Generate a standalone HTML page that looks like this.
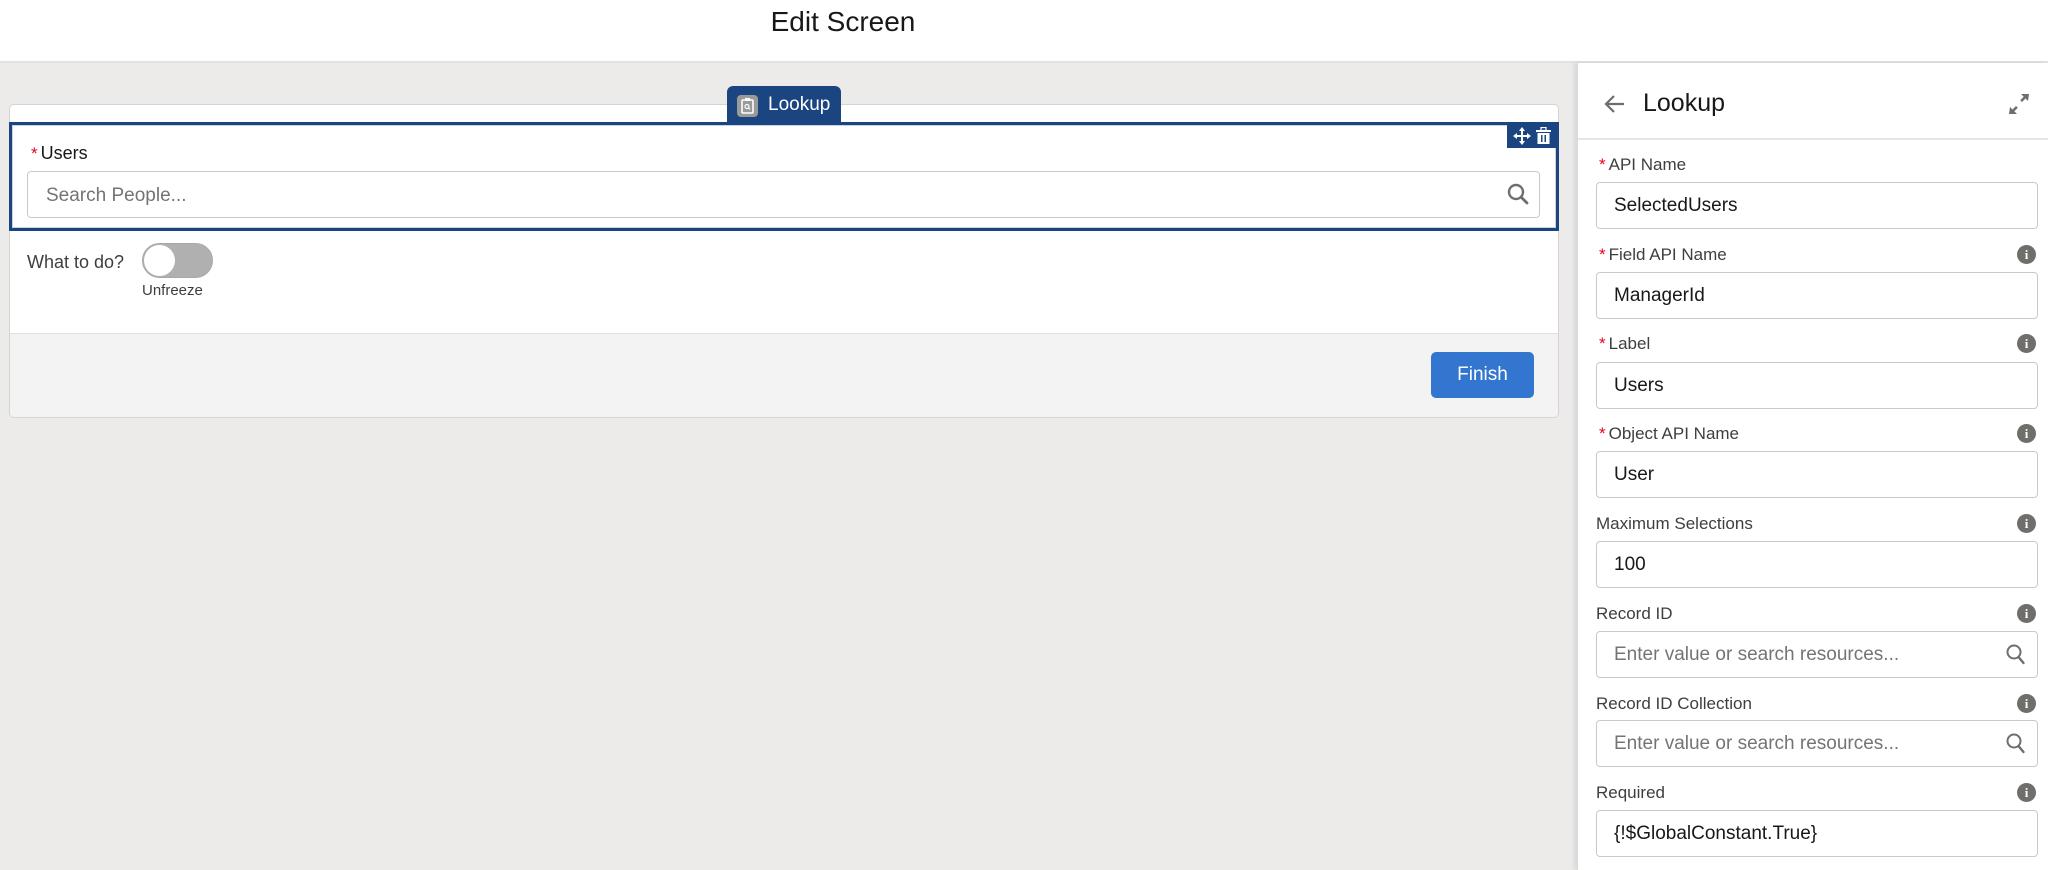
<!DOCTYPE html>
<html><head><meta charset="utf-8"><style>
*{box-sizing:border-box;margin:0;padding:0}
body{width:2048px;height:870px;overflow:hidden;background:#ecebea;font-family:"Liberation Sans",sans-serif;color:#181818;position:relative}
.abs{position:absolute}
.hdr{left:0;top:0;width:2048px;height:63px;background:#fff;border-bottom:2px solid #e2e2e2}
.title{left:0;width:1686px;top:6px;text-align:center;font-size:28px;color:#181818}
.card{left:9px;top:104px;width:1550px;height:314px;background:#fff;border:1px solid #d4d4d4;border-radius:5px;overflow:hidden}
.foot{left:0;top:228px;width:100%;height:86px;background:#f3f3f3;border-top:1px solid #e0e0e0}
.sel{left:9px;top:122px;width:1550px;height:109px;border:3px solid #1b4580;box-shadow:inset 0 0 0 1px #c9d3e3}
.tab{left:727px;top:86px;width:114px;height:38px;background:#1b4580;border-radius:6px 6px 0 0;color:#fff;font-size:19px}
.inp{background:#fff;border:1px solid #c9c9c9;border-radius:4px}
.lbl{font-size:17px;color:#3e3e3c}
.req{color:#ea001e;margin-right:3px;font-size:17px}
.panel{left:1577px;top:63px;width:471px;height:807px;background:#fff;border-left:1px solid #d8d8d8;box-shadow:-3px 0 4px rgba(0,0,0,.08)}
.info{width:19px;height:19px;border-radius:50%;background:#706e6b;color:#fff;font-size:13px;font-weight:bold;text-align:center;line-height:19px;font-family:"Liberation Serif",serif}
.val{font-size:19px;color:#181818;padding-left:17px;line-height:45px}
.ph{color:#747474}
</style></head><body>
<div class="abs hdr"></div>
<div class="abs title">Edit Screen</div>

<div class="abs card"><div class="abs foot"></div></div>
<div class="abs tab">
 <div class="abs" style="left:10px;top:9px;width:21px;height:22px;background:#9a9a9a;border-radius:4px"></div>
 <svg class="abs" style="left:13px;top:11px" width="15" height="18" viewBox="0 0 15 18"><rect x="2" y="3" width="11" height="13" rx="1" fill="none" stroke="#fff" stroke-width="1.6"/><rect x="5" y="1" width="5" height="3" fill="#fff"/><circle cx="7" cy="9.5" r="2" fill="none" stroke="#fff" stroke-width="1.2"/><path d="M8.5 11 L10 12.5" stroke="#fff" stroke-width="1.2"/></svg>
 <div class="abs" style="left:41px;top:8px">Lookup</div>
</div>
<div class="abs sel"></div>
<div class="abs" style="left:1507px;top:125px;width:50px;height:23px;background:#1b4580">
 <svg class="abs" style="left:6px;top:2px" width="18" height="18" viewBox="0 0 18 18" fill="#fff"><rect x="8" y="3" width="2" height="12"/><rect x="3" y="8" width="12" height="2"/><path d="M9 0l3 4H6z M9 18l3-4H6z M0 9l4-3v6z M18 9l-4-3v6z"/></svg>
 <svg class="abs" style="left:29px;top:2px" width="15" height="18" viewBox="0 0 15 18" fill="#fff"><rect x="0" y="3" width="15" height="2"/><rect x="5" y="0.5" width="5" height="3" fill="none" stroke="#fff" stroke-width="1.2"/><path d="M1.5 6h12v11h-12z M5 8v7h1.5V8z M8.5 8v7H10V8z" fill-rule="evenodd"/></svg>
</div>

<div class="abs lbl" style="left:31px;top:143px;color:#181818;font-size:18px"><span class="req">*</span>Users</div>
<div class="abs inp" style="left:27px;top:171px;width:1513px;height:47px"></div>
<div class="abs ph" style="left:46px;top:185px;font-size:19px">Search People...</div>
<svg class="abs" style="left:1506px;top:182px" width="24" height="24" viewBox="0 0 24 24"><circle cx="10" cy="10" r="7" fill="none" stroke="#706e6b" stroke-width="2.4"/><path d="M15 15l6 6" stroke="#706e6b" stroke-width="2.8" stroke-linecap="round"/></svg>

<div class="abs" style="left:27px;top:252px;font-size:18px;color:#3e3e3c">What to do?</div>
<div class="abs" style="left:142px;top:243px;width:71px;height:35px;background:#b0b0b0;border-radius:18px;border:1px solid #a8a8a8"><div class="abs" style="left:1px;top:1px;width:31px;height:31px;border-radius:50%;background:#fff"></div></div>
<div class="abs" style="left:142px;top:282px;font-size:15px;color:#3e3e3c">Unfreeze</div>

<div class="abs" style="left:1431px;top:352px;width:103px;height:46px;background:#3276d0;border-radius:5px;color:#fff;font-size:19px;text-align:center;line-height:46px">Finish</div>

<div class="abs panel">
 <div class="abs" style="left:0;top:75px;width:471px;height:2px;background:#e5e5e5"></div>
</div>
<svg class="abs" style="left:1604px;top:94px" width="22" height="20" viewBox="0 0 22 20"><path d="M20 10H3 M10 2L2 10l8 8" fill="none" stroke="#706e6b" stroke-width="2.2"/></svg>
<div class="abs" style="left:1643px;top:89px;font-size:25px;color:#181818">Lookup</div>
<svg class="abs" style="left:2008px;top:93px" width="22" height="22" viewBox="0 0 22 22" fill="#706e6b"><path d="M21 1l-1 7-2.5-2.5-3.5 3.5-1.8-1.8 3.5-3.5L13 1z M1 21l1-7 2.5 2.5 3.5-3.5 1.8 1.8-3.5 3.5L9 21z"/></svg>

<div class="abs lbl" style="left:1599px;top:155px"><span class="req">*</span>API Name</div>
<div class="abs inp val" style="left:1596px;top:182px;width:442px;height:47px">SelectedUsers</div>

<div class="abs lbl" style="left:1599px;top:245px"><span class="req">*</span>Field API Name</div>
<div class="abs info" style="left:2017px;top:245px">i</div>
<div class="abs inp val" style="left:1596px;top:272px;width:442px;height:47px">ManagerId</div>

<div class="abs lbl" style="left:1599px;top:334px"><span class="req">*</span>Label</div>
<div class="abs info" style="left:2017px;top:334px">i</div>
<div class="abs inp val" style="left:1596px;top:362px;width:442px;height:47px">Users</div>

<div class="abs lbl" style="left:1599px;top:424px"><span class="req">*</span>Object API Name</div>
<div class="abs info" style="left:2017px;top:424px">i</div>
<div class="abs inp val" style="left:1596px;top:451px;width:442px;height:47px">User</div>

<div class="abs lbl" style="left:1596px;top:514px">Maximum Selections</div>
<div class="abs info" style="left:2017px;top:514px">i</div>
<div class="abs inp val" style="left:1596px;top:541px;width:442px;height:47px">100</div>

<div class="abs lbl" style="left:1596px;top:604px">Record ID</div>
<div class="abs info" style="left:2017px;top:604px">i</div>
<div class="abs inp val ph" style="left:1596px;top:631px;width:442px;height:47px">Enter value or search resources...</div>
<svg class="abs" style="left:2005px;top:643px" width="22" height="24" viewBox="0 0 22 24"><circle cx="9" cy="9" r="6.5" fill="none" stroke="#706e6b" stroke-width="2"/><path d="M13.5 14l5 6" stroke="#706e6b" stroke-width="2.4" stroke-linecap="round"/></svg>

<div class="abs lbl" style="left:1596px;top:694px">Record ID Collection</div>
<div class="abs info" style="left:2017px;top:694px">i</div>
<div class="abs inp val ph" style="left:1596px;top:720px;width:442px;height:47px">Enter value or search resources...</div>
<svg class="abs" style="left:2005px;top:732px" width="22" height="24" viewBox="0 0 22 24"><circle cx="9" cy="9" r="6.5" fill="none" stroke="#706e6b" stroke-width="2"/><path d="M13.5 14l5 6" stroke="#706e6b" stroke-width="2.4" stroke-linecap="round"/></svg>

<div class="abs lbl" style="left:1596px;top:783px">Required</div>
<div class="abs info" style="left:2017px;top:783px">i</div>
<div class="abs inp val" style="left:1596px;top:810px;width:442px;height:47px">{!$GlobalConstant.True}</div>
</body></html>
